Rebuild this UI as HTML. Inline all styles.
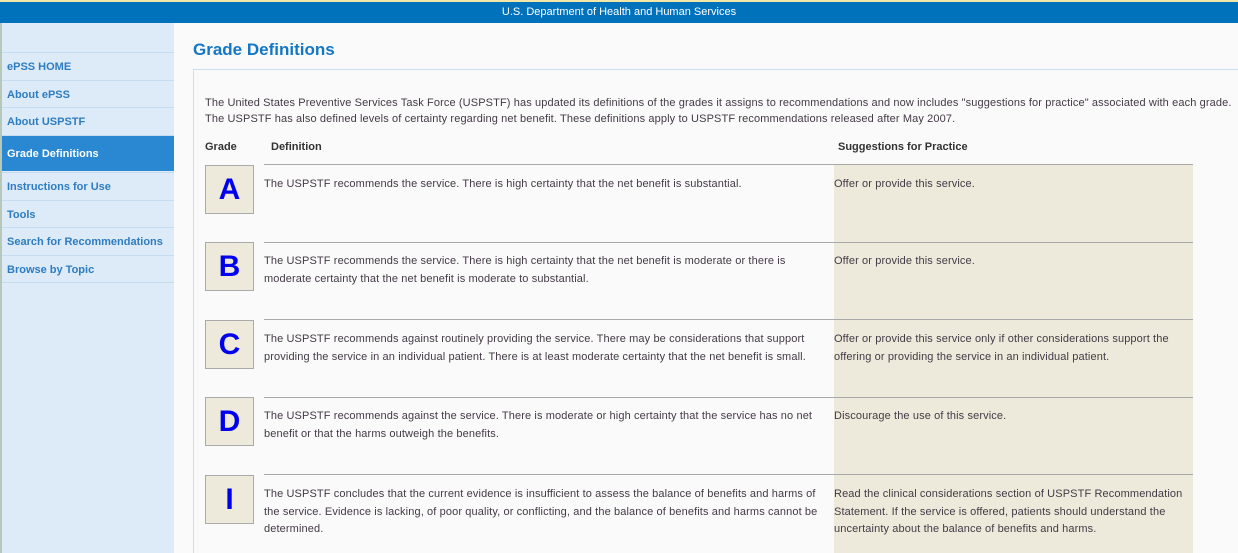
<!DOCTYPE html>
<html><head><style>
*{margin:0;padding:0;box-sizing:border-box}
body{width:1238px;height:553px;overflow:hidden;background:#fafafa;font-family:"Liberation Sans",Arial,sans-serif;position:relative}
.top{position:absolute;left:0;top:0;width:1238px;height:2px;background:#f3e7a8}
.bar{position:absolute;left:0;top:2px;width:1238px;height:21px;background:#0072bb;color:#fff;font-size:11px;text-align:center;line-height:21px}
.side{position:absolute;left:0;top:23px;width:174px;height:530px;background:#dcebf7;border-left:2px solid #b8c8b8}
.nav{position:absolute;left:0;width:172px;border-top:1px solid #c4dcee;color:#2e7cc2;font-weight:bold;font-size:11px;padding-left:5px}
.nav.act{background:#2a87d2;color:#fff}
h1{position:absolute;left:193px;top:40px;font-size:17px;color:#1477c4;font-weight:bold}
.box{position:absolute;left:193px;top:69px;width:1045px;height:484px;border-top:1px solid #c9dfee;border-left:1px solid #c9dfee}
.intro{position:absolute;left:205px;top:95px;font-size:11px;letter-spacing:0.12px;line-height:16px;color:#433a45;white-space:nowrap}
.hd{position:absolute;top:141px;font-size:11px;font-weight:bold;color:#333}
.tan{position:absolute;left:834px;top:165px;width:359px;height:388px;background:#eeeadb}
.line{position:absolute;left:264px;width:929px;height:1px;background:#a9a9a9}
.g{position:absolute;left:205px;width:49px;height:49px;background:#eeeadb;border:1px solid #aaa;color:#0000ee;font-weight:bold;font-size:30px;text-align:center;line-height:47px}
.t{position:absolute;font-size:11px;letter-spacing:0.12px;line-height:17.5px;color:#433a45}
</style></head><body>
<div class="top"></div>
<div class="bar">U.S. Department of Health and Human Services</div>
<div class="side">
<div class="nav" style="top:29px;height:28px;line-height:28px">ePSS HOME</div>
<div class="nav" style="top:57px;height:28px;line-height:28px">About ePSS</div>
<div class="nav" style="top:84px;height:28px;line-height:28px">About USPSTF</div>
<div class="nav act" style="top:112px;height:36px;line-height:36px">Grade Definitions</div>
<div class="nav" style="top:149px;height:28px;line-height:28px">Instructions for Use</div>
<div class="nav" style="top:177px;height:28px;line-height:28px">Tools</div>
<div class="nav" style="top:204px;height:28px;line-height:28px">Search for Recommendations</div>
<div class="nav" style="top:232px;height:28px;line-height:28px">Browse by Topic</div>
<div class="nav" style="top:259px;height:1px"></div>
</div>
<h1>Grade Definitions</h1>
<div class="box"></div>
<div class="intro">The United States Preventive Services Task Force (USPSTF) has updated its definitions of the grades it assigns to recommendations and now includes "suggestions for practice" associated with each grade.<br>The USPSTF has also defined levels of certainty regarding net benefit. These definitions apply to USPSTF recommendations released after May 2007.</div>
<div class="hd" style="left:205px">Grade</div>
<div class="hd" style="left:271px">Definition</div>
<div class="hd" style="left:838px">Suggestions for Practice</div>
<div class="tan"></div>

<div class="line" style="top:164px"></div>
<div class="g" style="top:165px">A</div>
<div class="t" style="left:264px;top:176px">The USPSTF recommends the service. There is high certainty that the net benefit is substantial.</div>
<div class="t" style="left:834px;top:176px">Offer or provide this service.</div>

<div class="line" style="top:242px"></div>
<div class="g" style="top:242px">B</div>
<div class="t" style="left:264px;top:253px;width:560px">The USPSTF recommends the service. There is high certainty that the net benefit is moderate or there is moderate certainty that the net benefit is moderate to substantial.</div>
<div class="t" style="left:834px;top:253px">Offer or provide this service.</div>

<div class="line" style="top:319px"></div>
<div class="g" style="top:320px">C</div>
<div class="t" style="left:264px;top:331px;width:560px">The USPSTF recommends against routinely providing the service. There may be considerations that support providing the service in an individual patient. There is at least moderate certainty that the net benefit is small.</div>
<div class="t" style="left:834px;top:331px;width:355px">Offer or provide this service only if other considerations support the offering or providing the service in an individual patient.</div>

<div class="line" style="top:397px"></div>
<div class="g" style="top:397px">D</div>
<div class="t" style="left:264px;top:408px;width:560px">The USPSTF recommends against the service. There is moderate or high certainty that the service has no net benefit or that the harms outweigh the benefits.</div>
<div class="t" style="left:834px;top:408px">Discourage the use of this service.</div>

<div class="line" style="top:474px"></div>
<div class="g" style="top:475px">I</div>
<div class="t" style="left:264px;top:486px;width:560px">The USPSTF concludes that the current evidence is insufficient to assess the balance of benefits and harms of the service. Evidence is lacking, of poor quality, or conflicting, and the balance of benefits and harms cannot be determined.</div>
<div class="t" style="left:834px;top:486px;width:355px">Read the clinical considerations section of USPSTF Recommendation Statement. If the service is offered, patients should understand the uncertainty about the balance of benefits and harms.</div>
</body></html>
